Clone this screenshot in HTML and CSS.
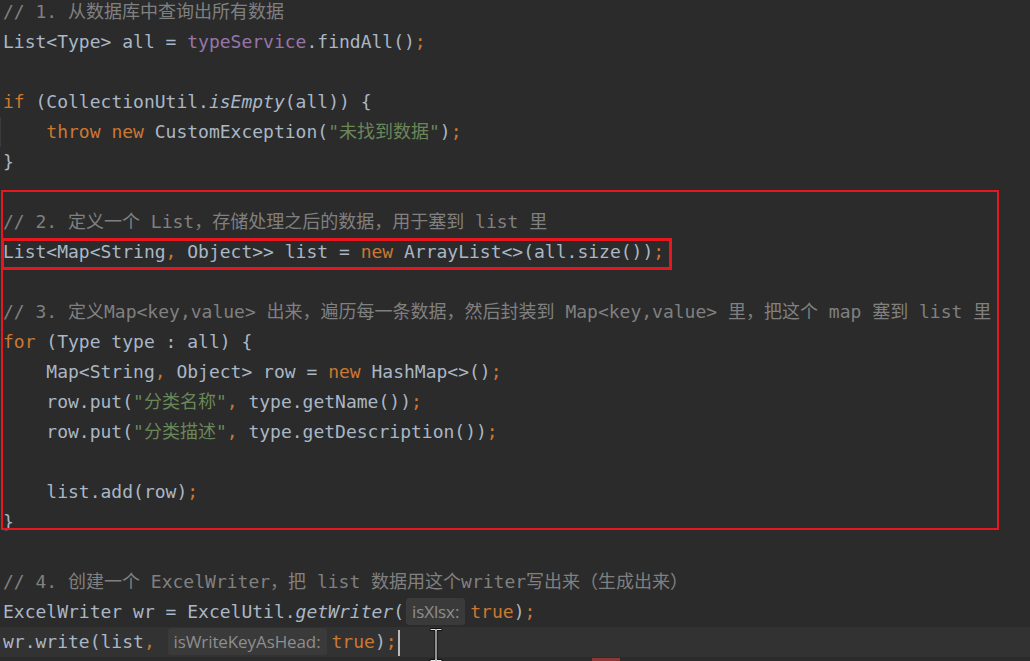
FILE: index.html
```html
<!DOCTYPE html>
<html lang="zh-CN">
<head>
<meta charset="utf-8">
<title>Code</title>
<link rel="stylesheet" href="styles.css">
</head>
<body>
<div class="editor">
  <div class="code">
    <div class="ln"><span class="cm">// 1. 从数据库中查询出所有数据</span></div>
    <div class="ln">List&lt;Type&gt; all = <span class="fd">typeService</span>.findAll()<span class="kw">;</span></div>
    <div class="ln"> </div>
    <div class="ln"><span class="kw">if</span> (CollectionUtil.<span class="it">isEmpty</span>(all)) {</div>
    <div class="ln guide">    <span class="kw">throw new</span> CustomException(<span class="st">"未找到数据"</span>)<span class="kw">;</span></div>
    <div class="ln">}</div>
    <div class="ln"> </div>
    <div class="ln"><span class="cm">// 2. 定义一个 List，存储处理之后的数据，用于塞到 list 里</span></div>
    <div class="ln">List&lt;Map&lt;String<span class="kw">,</span> Object&gt;&gt; list = <span class="kw">new</span> ArrayList&lt;&gt;(all.size())<span class="kw">;</span></div>
    <div class="ln"> </div>
    <div class="ln"><span class="cm">// 3. 定义Map&lt;key,value&gt; 出来，遍历每一条数据，然后封装到 Map&lt;key,value&gt; 里，把这个 map 塞到 list 里</span></div>
    <div class="ln"><span class="kw">for</span> (Type type : all) {</div>
    <div class="ln">    Map&lt;String<span class="kw">,</span> Object&gt; row = <span class="kw">new</span> HashMap&lt;&gt;()<span class="kw">;</span></div>
    <div class="ln">    row.put(<span class="st">"分类名称"</span><span class="kw">,</span> type.getName())<span class="kw">;</span></div>
    <div class="ln">    row.put(<span class="st">"分类描述"</span><span class="kw">,</span> type.getDescription())<span class="kw">;</span></div>
    <div class="ln"> </div>
    <div class="ln">    list.add(row)<span class="kw">;</span></div>
    <div class="ln">}</div>
    <div class="ln"> </div>
    <div class="ln"><span class="cm">// 4. 创建一个 ExcelWriter，把 list 数据用这个writer写出来（生成出来）</span></div>
    <div class="ln">ExcelWriter wr = ExcelUtil.<span class="it">getWriter</span>(<span class="hint">isXlsx:</span><span class="kw">true</span>)<span class="kw">;</span></div>
    <div class="ln cur">wr.write(list<span class="kw">,</span> <span class="hint">isWriteKeyAsHead:</span><span class="kw">true</span>)<span class="kw">;</span><span class="caret"></span></div>
  </div>

  <div class="mark mark-outer"></div>
  <div class="mark mark-inner"></div>

  <svg class="ibeam" width="14" height="34" viewBox="0 0 14 34">
    <path d="M2 1.5 H5.5 Q7 1.5 7 3 Q7 1.5 8.5 1.5 H12 M7 3 V31 M2 32.5 H5.5 Q7 32.5 7 31 Q7 32.5 8.5 32.5 H12" fill="none" stroke="#0d0d0d" stroke-width="3" stroke-linecap="round"/>
    <path d="M2 1.5 H5.5 Q7 1.5 7 3 Q7 1.5 8.5 1.5 H12 M7 3 V31 M2 32.5 H5.5 Q7 32.5 7 31 Q7 32.5 8.5 32.5 H12" fill="none" stroke="#e8e8e8" stroke-width="1.2" stroke-linecap="round"/>
  </svg>

  <div class="redbit"></div>
</div>
</body>
</html>
```

FILE: styles.css
```css
html, body {
  margin: 0;
  padding: 0;
  background: #2b2b2b;
  overflow: hidden;
}

.editor {
  position: relative;
  width: 1030px;
  height: 661px;
  overflow: hidden;
  background: #2b2b2b;
}

.code {
  margin-top: -3px;
  font-family: "DejaVu Sans Mono", "Noto Sans CJK SC", monospace;
  font-size: 18px;
  color: #a9b7c6;
}

.ln {
  height: 30px;
  line-height: 30px;
  padding-left: 3px;
  white-space: pre;
}

.guide {
  box-shadow: inset 3px 0 0 -2px #3b3b3b;
}

.cur {
  background: #323232;
}

.cm { color: #808080; }
.kw { color: #cc7832; }
.st { color: #6a8759; }
.fd { color: #9876aa; }
.it { font-style: italic; }

.hint {
  display: inline-block;
  font-family: "Open Sans", "Noto Sans", sans-serif;
  font-size: 17px;
  line-height: 27px;
  height: 27px;
  color: #8e8e8e;
  background: #3a3a3a;
  border-radius: 3px;
  padding: 0 6px 0 6px;
  margin: 1px 5px 0 2px;
  vertical-align: top;
  letter-spacing: -0.1px;
}

.caret {
  display: inline-block;
  width: 2px;
  height: 26px;
  background: #bbbbbb;
  vertical-align: middle;
  margin-left: 1px;
}

.mark {
  position: absolute;
  border: 2px solid #e8161f;
  box-sizing: border-box;
}

.mark-outer {
  left: 1px;
  top: 190px;
  width: 998px;
  height: 340px;
}

.mark-inner {
  left: 1px;
  top: 238px;
  width: 671px;
  height: 32px;
  border-width: 3px;
}

.ibeam {
  position: absolute;
  left: 429px;
  top: 628px;
}

.redbit {
  position: absolute;
  left: 592px;
  top: 658px;
  width: 28px;
  height: 3px;
  background: #8a3a32;
}
```
